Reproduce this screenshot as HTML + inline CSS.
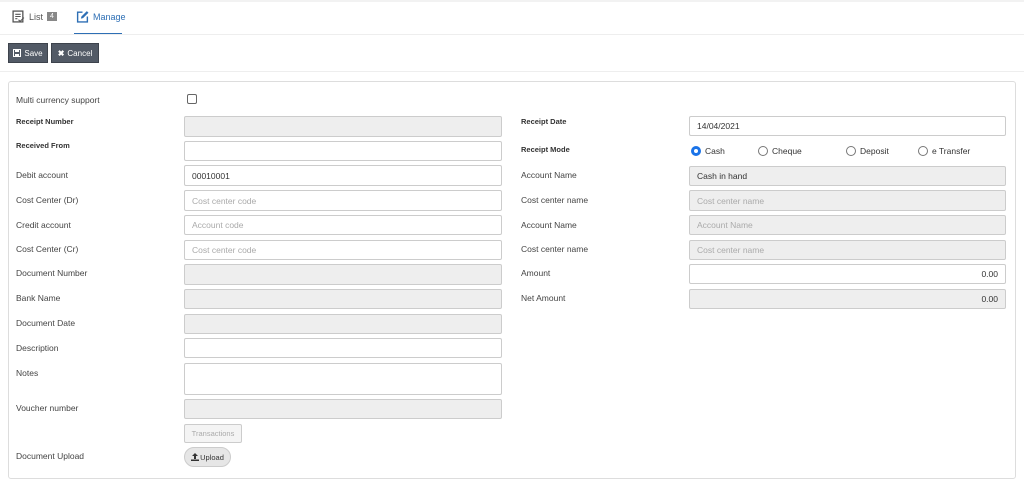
<!DOCTYPE html><html><head><style>
body{margin:0;width:1024px;height:485px;background:#fff;font-family:"Liberation Sans",sans-serif;position:relative;overflow:hidden;color:#333}
.a{position:absolute}
.l{position:absolute;font-size:8.5px;color:#444}
.b{font-weight:bold;font-size:7.5px;color:#333}
.i{position:absolute;box-sizing:border-box;border:1px solid #ccc;border-radius:2px;background:#fff;font-size:8.5px;padding-left:7px;display:flex;align-items:center;color:#333}
.g{background:#eee}
.p{color:#aaa}
.r{justify-content:flex-end;padding-right:7px}
.rad{position:absolute;font-size:8.5px;display:flex;align-items:center;gap:4px}
.rad i{width:10px;height:10px;border:1px solid #777;border-radius:50%;display:inline-block;box-sizing:border-box}
.btn{position:absolute;top:43px;height:20px;background:#525a66;border:1px solid #3d434c;box-sizing:border-box;color:#fff;font-size:8px;display:flex;align-items:center;justify-content:center;gap:3px}
</style></head><body>
<div class="a" style="left:0;top:0;width:1024px;height:2px;background:#f2f2f2"></div>
<div class="a" style="left:12px;top:10px;font-size:9px;color:#555;display:flex;align-items:center;gap:4px">
<svg width="13" height="13" viewBox="0 0 12 12"><rect x="1" y="1" width="9" height="10" fill="none" stroke="#555" stroke-width="1.2"/><path d="M3 4h5M3 6h5M3 8h2M6 9l1.5 1.5L11 7" stroke="#555" fill="none"/></svg>List <span style="background:#888;color:#fff;font-size:7px;padding:1px 3px">4</span></div>
<div class="a" style="left:76px;top:10px;font-size:9px;color:#2e6fb5;display:flex;align-items:center;gap:4px">
<svg width="13" height="13" viewBox="0 0 12 12"><path d="M6 2H1.5v9h9V6" stroke="#2e6fb5" fill="none" stroke-width="1.3"/><path d="M4.5 8l.5-2L10 1l1.5 1.5-5 5z" fill="#2e6fb5"/></svg>Manage</div>
<div class="a" style="left:74px;top:33px;width:48px;height:2px;background:#2e6fb5"></div>
<div class="a" style="left:0;top:34px;width:1024px;height:1px;background:#eee"></div>
<div class="btn" style="left:8px;width:40px"><svg width="8" height="8" viewBox="0 0 8 8"><rect x="0.5" y="0.5" width="7" height="7" fill="none" stroke="#fff"/><rect x="2" y="0.5" width="4" height="2.5" fill="#fff"/><rect x="2" y="5" width="4" height="2.5" fill="#fff"/></svg>Save</div>
<div class="btn" style="left:51px;width:48px"><b>✖</b>Cancel</div>
<div class="a" style="left:0;top:71px;width:1024px;height:1px;background:#eee"></div>
<div class="a" style="left:8px;top:81px;width:1008px;height:398px;border:1px solid #ddd;border-radius:3px;box-sizing:border-box"></div>
<div class="l" style="left:16px;top:95px">Multi currency support</div>
<div class="a" style="left:187px;top:94px;width:8px;height:8px;border:1px solid #666;border-radius:2px"></div>

<div class="l b" style="left:16px;top:117px">Receipt Number</div><div class="i g" style="left:184px;top:116px;width:318px;height:21px"></div>
<div class="l b" style="left:16px;top:141px">Received From</div><div class="i" style="left:184px;top:141px;width:318px;height:20px"></div>
<div class="l" style="left:16px;top:170px">Debit account</div><div class="i" style="left:184px;top:165px;width:318px;height:21px">00010001</div>
<div class="l" style="left:16px;top:195px">Cost Center (Dr)</div><div class="i p" style="left:184px;top:190px;width:318px;height:21px">Cost center code</div>
<div class="l" style="left:16px;top:220px">Credit account</div><div class="i p" style="left:184px;top:215px;width:318px;height:20px">Account code</div>
<div class="l" style="left:16px;top:244px">Cost Center (Cr)</div><div class="i p" style="left:184px;top:240px;width:318px;height:20px">Cost center code</div>
<div class="l" style="left:16px;top:268px">Document Number</div><div class="i g" style="left:184px;top:264px;width:318px;height:21px"></div>
<div class="l" style="left:16px;top:293px">Bank Name</div><div class="i g" style="left:184px;top:289px;width:318px;height:20px"></div>
<div class="l" style="left:16px;top:318px">Document Date</div><div class="i g" style="left:184px;top:314px;width:318px;height:20px"></div>
<div class="l" style="left:16px;top:343px">Description</div><div class="i" style="left:184px;top:338px;width:318px;height:20px"></div>
<div class="l" style="left:16px;top:368px">Notes</div><div class="i" style="left:184px;top:363px;width:318px;height:32px"></div>
<div class="l" style="left:16px;top:403px">Voucher number</div><div class="i g" style="left:184px;top:399px;width:318px;height:20px"></div>
<div class="i p" style="left:184px;top:424px;width:58px;height:19px;background:#f4f4f4;font-size:7.5px;justify-content:center;padding:0">Transactions</div>
<div class="l" style="left:16px;top:451px">Document Upload</div>
<div class="i" style="left:184px;top:447px;width:47px;height:20px;border-radius:10px;background:#e6e6e6;font-size:7.5px;justify-content:center;padding:0;gap:1px"><svg width="8" height="8" viewBox="0 0 8 8"><path d="M4 0L7 3H5v3H3V3H1z" fill="#333"/><rect x="0" y="6.5" width="8" height="1.5" fill="#333"/></svg>Upload</div>

<div class="l b" style="left:521px;top:117px">Receipt Date</div><div class="i" style="left:689px;top:116px;width:317px;height:20px">14/04/2021</div>
<div class="l b" style="left:521px;top:145px">Receipt Mode</div>
<div class="rad" style="left:691px;top:146px"><i style="border:3px solid #1a73e8"></i>Cash</div>
<div class="rad" style="left:758px;top:146px"><i></i>Cheque</div>
<div class="rad" style="left:846px;top:146px"><i></i>Deposit</div>
<div class="rad" style="left:918px;top:146px"><i></i>e Transfer</div>
<div class="l" style="left:521px;top:170px">Account Name</div><div class="i g" style="left:689px;top:166px;width:317px;height:20px">Cash in hand</div>
<div class="l" style="left:521px;top:195px">Cost center name</div><div class="i g p" style="left:689px;top:190px;width:317px;height:21px">Cost center name</div>
<div class="l" style="left:521px;top:220px">Account Name</div><div class="i g p" style="left:689px;top:215px;width:317px;height:20px">Account Name</div>
<div class="l" style="left:521px;top:244px">Cost center name</div><div class="i g p" style="left:689px;top:240px;width:317px;height:20px">Cost center name</div>
<div class="l" style="left:521px;top:268px">Amount</div><div class="i r" style="left:689px;top:264px;width:317px;height:20px">0.00</div>
<div class="l" style="left:521px;top:293px">Net Amount</div><div class="i g r" style="left:689px;top:289px;width:317px;height:20px">0.00</div>
</body></html>
